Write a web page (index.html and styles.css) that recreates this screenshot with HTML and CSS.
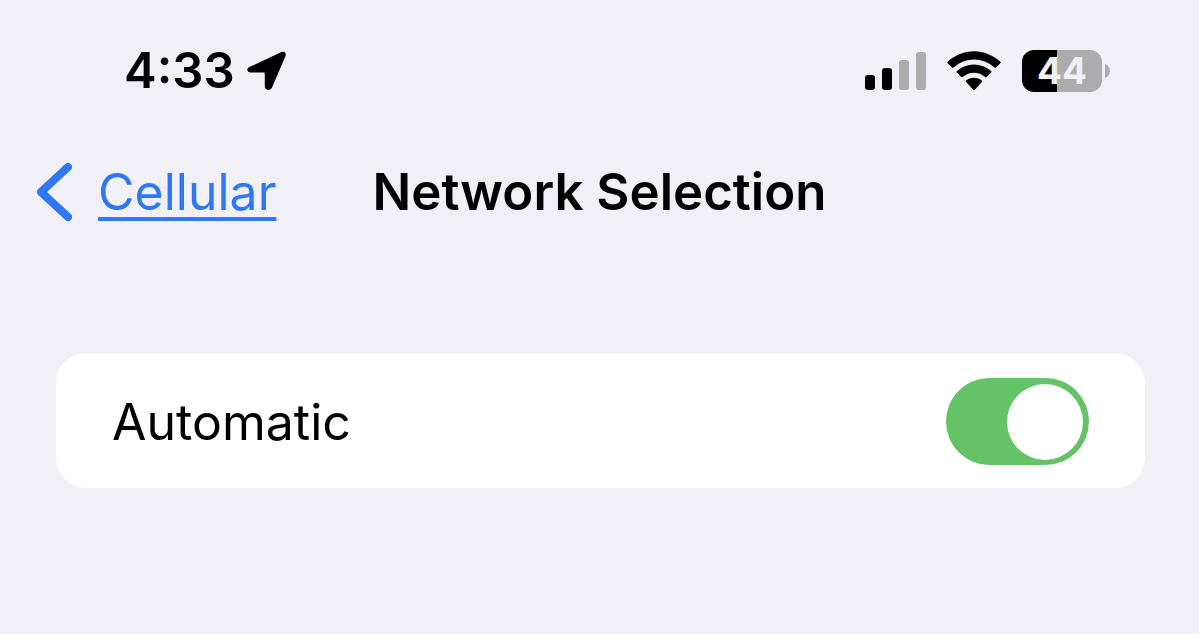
FILE: index.html
```html
<!DOCTYPE html>
<html lang="en">

<head>
    <meta charset="UTF-8">
    <meta name="viewport" content="width=device-width, initial-scale=1">
    <title>Network Selection</title>
    <link rel="stylesheet" href="styles.css">
</head>

<body>
    <div class="status-bar">
        <div class="status-left">
            <span class="time">4:33</span>
            <svg class="location" width="40" height="40" viewBox="0 0 40 40" aria-hidden="true">
                <path d="M2.500 16 34 1.300C37.400 -.200 39.800 2.200 38.300 5.600L25 36.500C23.400 40.200 17.800 39.300 17.800 35.400V22.700Q17.800 21.600 16.700 21.600H4C-.200 21.600-.900 17.600 2.500 16Z" />
            </svg>
        </div>
        <div class="status-right">
            <svg width="62" height="38" viewBox="0 0 62 38" aria-hidden="true">
                <rect x="1" y="23" width="10" height="15" rx="3" />
                <rect x="18" y="16" width="10" height="22" rx="3" />
                <rect class="dim" x="35" y="8" width="10" height="30" rx="3" />
                <rect class="dim" x="52" y="0" width="10" height="38" rx="3" />
            </svg>
            <svg width="54" height="40" viewBox="0 0 54 40" aria-hidden="true">
                <path d="M.700 12.300Q-.100 11.500.700 10.700C15.500-3.400 38.500-3.400 53.300 10.700Q54.100 11.500 53.300 12.300L49 16.600Q48.200 17.400 47.400 16.600C35.800 5.800 18.200 5.800 6.600 16.600Q5.800 17.400 5 16.600Z" />
                <path d="M9.900 21.600Q9.100 20.800 9.900 20C19.500 11.200 34.500 11.200 44.100 20Q44.900 20.800 44.100 21.600L39.800 25.900Q39 26.700 38.200 25.900C31.800 20.200 22.200 20.200 15.800 25.900Q15 26.700 14.200 25.900Z" />
                <path d="M19.100 30.900Q18.300 30.100 19.200 29.400C23.500 25.700 30.500 25.700 34.800 29.400Q35.700 30.100 34.900 30.900L27.800 38.800Q27 39.600 26.200 38.800Z" />
            </svg>
            <div class="battery">
                <div class="battery-body">44</div>
                <svg width="5" height="14" viewBox="0 0 5 14" aria-hidden="true">
                    <path class="dim" d="M0 0C3 1 5 4 5 7S3 13 0 14Z" />
                </svg>
            </div>
        </div>
    </div>

    <nav class="nav-bar">
        <a class="back" href="#">
            <svg width="36" height="60" viewBox="0 0 36 60" aria-hidden="true">
                <path d="M32 5 5 30 32 55" />
            </svg>
            <span class="back-label">Cellular</span>
        </a>
        <h1 class="title">Network Selection</h1>
    </nav>

    <main class="settings">
        <div class="row">
            <label class="row-label" for="automatic">Automatic</label>
            <input class="switch" type="checkbox" role="switch" id="automatic" checked>
        </div>
    </main>
</body>

</html>
```
FILE: styles.css
```css
* {
    box-sizing: border-box;
    margin: 0;
    padding: 0;
}

body {
    background: #f1f0f6;
    color: #000;
    font-family: Inter, "Liberation Sans", sans-serif;
    font-size: 50px;
    line-height: 64px;
}

svg {
    display: block;
    flex: none;
}

.dim {
    fill: #acacae;
}

.status-bar {
    display: flex;
    justify-content: space-between;
    align-items: center;
    padding: 39px 89px 0 124px;
}

.status-left {
    display: flex;
    align-items: center;
    gap: 12px;
}

.status-right {
    display: flex;
    align-items: center;
    gap: 21px;
}

.time {
    font-size: 49px;
    font-weight: 600;
}

.battery {
    display: flex;
    align-items: center;
    gap: 3px;
}

.battery-body {
    width: 80px;
    height: 42px;
    border-radius: 12px;
    background: linear-gradient(to right, #000 35px, #acacae 35px);
    color: #f1f0f6;
    font-size: 37px;
    font-weight: 700;
    line-height: 42px;
    text-align: center;
}

.nav-bar {
    display: grid;
    grid-template-columns: 1fr auto 1fr;
    align-items: center;
    padding: 57px 36px 0;
}

.back {
    display: flex;
    align-items: center;
    gap: 26px;
    color: #2e78f6;
    text-decoration: none;
}

.back path {
    fill: none;
    stroke: currentColor;
    stroke-width: 8;
    stroke-linecap: round;
    stroke-linejoin: round;
}

.back-label {
    text-decoration: underline;
    text-decoration-thickness: 4px;
    text-underline-offset: 7px;
    text-decoration-skip-ink: none;
}

.title {
    font-size: 51px;
    font-weight: 600;
    white-space: nowrap;
}

.settings {
    padding: 129px 54px 0 56px;
}

.row {
    display: flex;
    justify-content: space-between;
    align-items: center;
    padding: 25px 56px 23px;
    border-radius: 30px;
    background: #fff;
}

.switch {
    appearance: none;
    display: flex;
    justify-content: flex-end;
    align-items: center;
    width: 143px;
    height: 87px;
    padding: 6px;
    border-radius: 44px;
    background: #d9d9de;
}

.switch::before {
    content: "";
    width: 76px;
    height: 76px;
    border-radius: 50%;
    background: #fff;
}

.switch:not(:checked) {
    justify-content: flex-start;
}

.switch:checked {
    background: #64c366;
}
```
